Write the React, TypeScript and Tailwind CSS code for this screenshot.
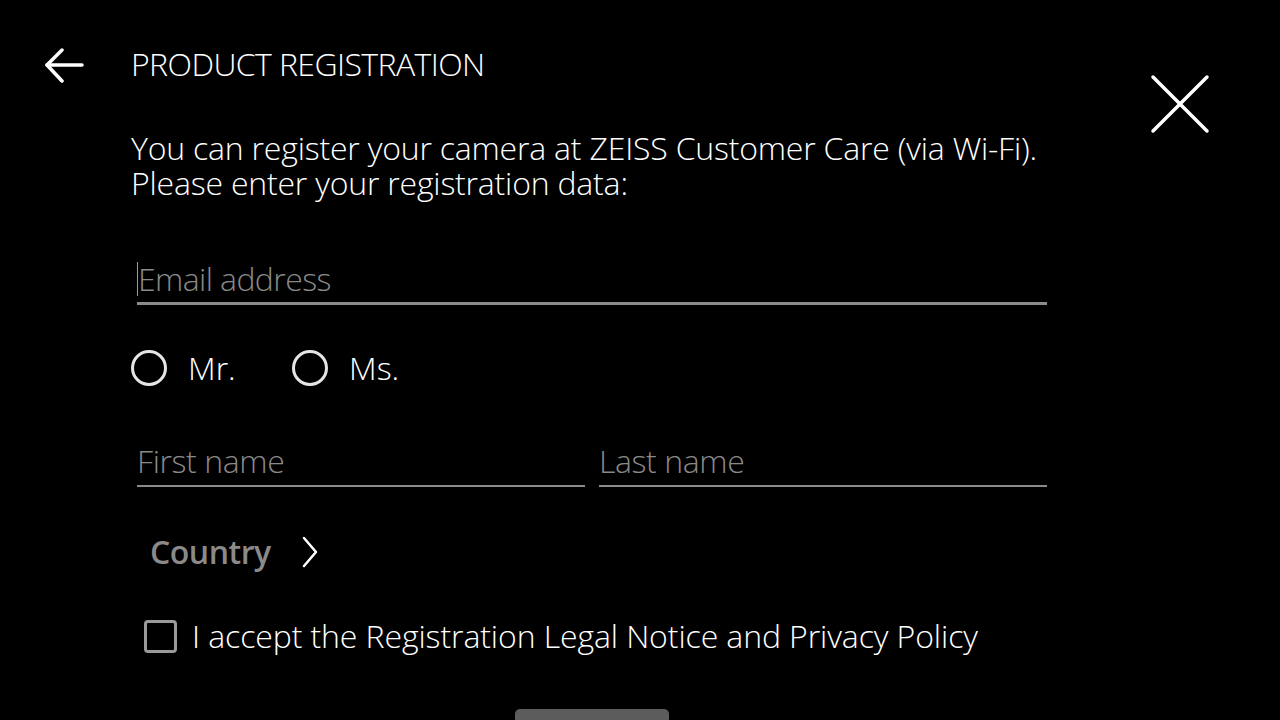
import React from "react";

const font = { fontFamily: '"Open Sans", "Noto Sans", sans-serif' };

const BackArrow = () => (
  <svg width="40" height="36" viewBox="0 0 40 36" fill="none" stroke="white" strokeWidth="3.5" strokeLinecap="round" strokeLinejoin="round">
    <path d="M3 17H38" />
    <path d="M18 2L3 17L18 33" />
  </svg>
);

const CloseIcon = () => (
  <svg width="60" height="60" viewBox="0 0 60 60" fill="none" stroke="white" strokeWidth="3.5" strokeLinecap="round">
    <path d="M3 3L57 57" />
    <path d="M57 3L3 57" />
  </svg>
);

const Radio = ({ label, className }: { label: string; className?: string }) => (
  <div className={"flex items-center gap-[21px] " + (className ?? "")}>
    <span className="w-[36px] h-[36px] rounded-full border-[3px] border-[#e6e6e6]" />
    <span className="text-[32px] font-light leading-none">{label}</span>
  </div>
);

const App: React.FC = () => {
  return (
    <div className="w-[1280px] h-[720px] bg-black text-white overflow-hidden flex" style={font}>
      <div className="w-[131px] shrink-0 pt-[48px] pl-[44px]">
        <BackArrow />
      </div>

      <div className="w-[916px] shrink-0 flex flex-col">
        <h1 className="mt-[44px] text-[32px] font-light leading-[40px] tracking-[-0.6px] whitespace-nowrap">PRODUCT REGISTRATION</h1>

        <div className="mt-[46px] text-[32px] font-light leading-[35px] tracking-[-0.2px] whitespace-nowrap">
          <div className="h-[35px]">You can register your camera at ZEISS Customer Care (via Wi-Fi).</div>
          <div className="h-[35px]">Please enter your registration data:</div>
        </div>

        <div className="mt-[60px] ml-[6px] w-[910px] border-b-[3px] border-[#8a8a8a] flex items-center pb-[4px]">
          <span className="w-[1px] h-[34px] bg-[#9a9a9a]" />
          <span className="text-[32px] font-light leading-[38px] tracking-[-0.6px] text-[#8a8a8a]">Email address</span>
        </div>

        <div className="mt-[45px] flex">
          <Radio label="Mr." className="w-[161px]" />
          <Radio label="Ms." />
        </div>

        <div className="mt-[56px] ml-[6px] flex gap-[14px]">
          <div className="w-[448px] border-b-2 border-[#8a8a8a] pb-[5px] text-[32px] font-light leading-[38px] tracking-[-0.4px] text-[#8a8a8a]">
            First name
          </div>
          <div className="w-[448px] border-b-2 border-[#8a8a8a] pb-[5px] text-[32px] font-light leading-[38px] tracking-[-0.4px] text-[#8a8a8a]">
            Last name
          </div>
        </div>

        <div className="mt-[46px] ml-[19px] flex items-center gap-[30px]">
          <span className="text-[32px] font-semibold leading-[38px] tracking-[-0.5px] text-[#8a8a8a]">Country</span>
          <svg width="18" height="32" viewBox="0 0 18 32" fill="none" stroke="white" strokeWidth="2.5" strokeLinecap="round" strokeLinejoin="round">
            <path d="M3 2L15 16L3 30" />
          </svg>
        </div>

        <label className="mt-[46px] ml-[13px] flex items-center gap-[15px] whitespace-nowrap">
          <span className="w-[33px] h-[33px] shrink-0 rounded-[4px] border-[3px] border-[#9a9a9a]" />
          <span className="text-[32px] font-light leading-[38px] tracking-[-0.1px]">I accept the Registration Legal Notice and Privacy Policy</span>
        </label>

        <div className="mt-[54px] ml-[384px] w-[154px] h-[40px] rounded-t-[5px] bg-[#5c5c5c]" />
      </div>

      <div className="flex-1 pt-[74px] pl-[103px]">
        <CloseIcon />
      </div>
    </div>
  );
};

export default App;
